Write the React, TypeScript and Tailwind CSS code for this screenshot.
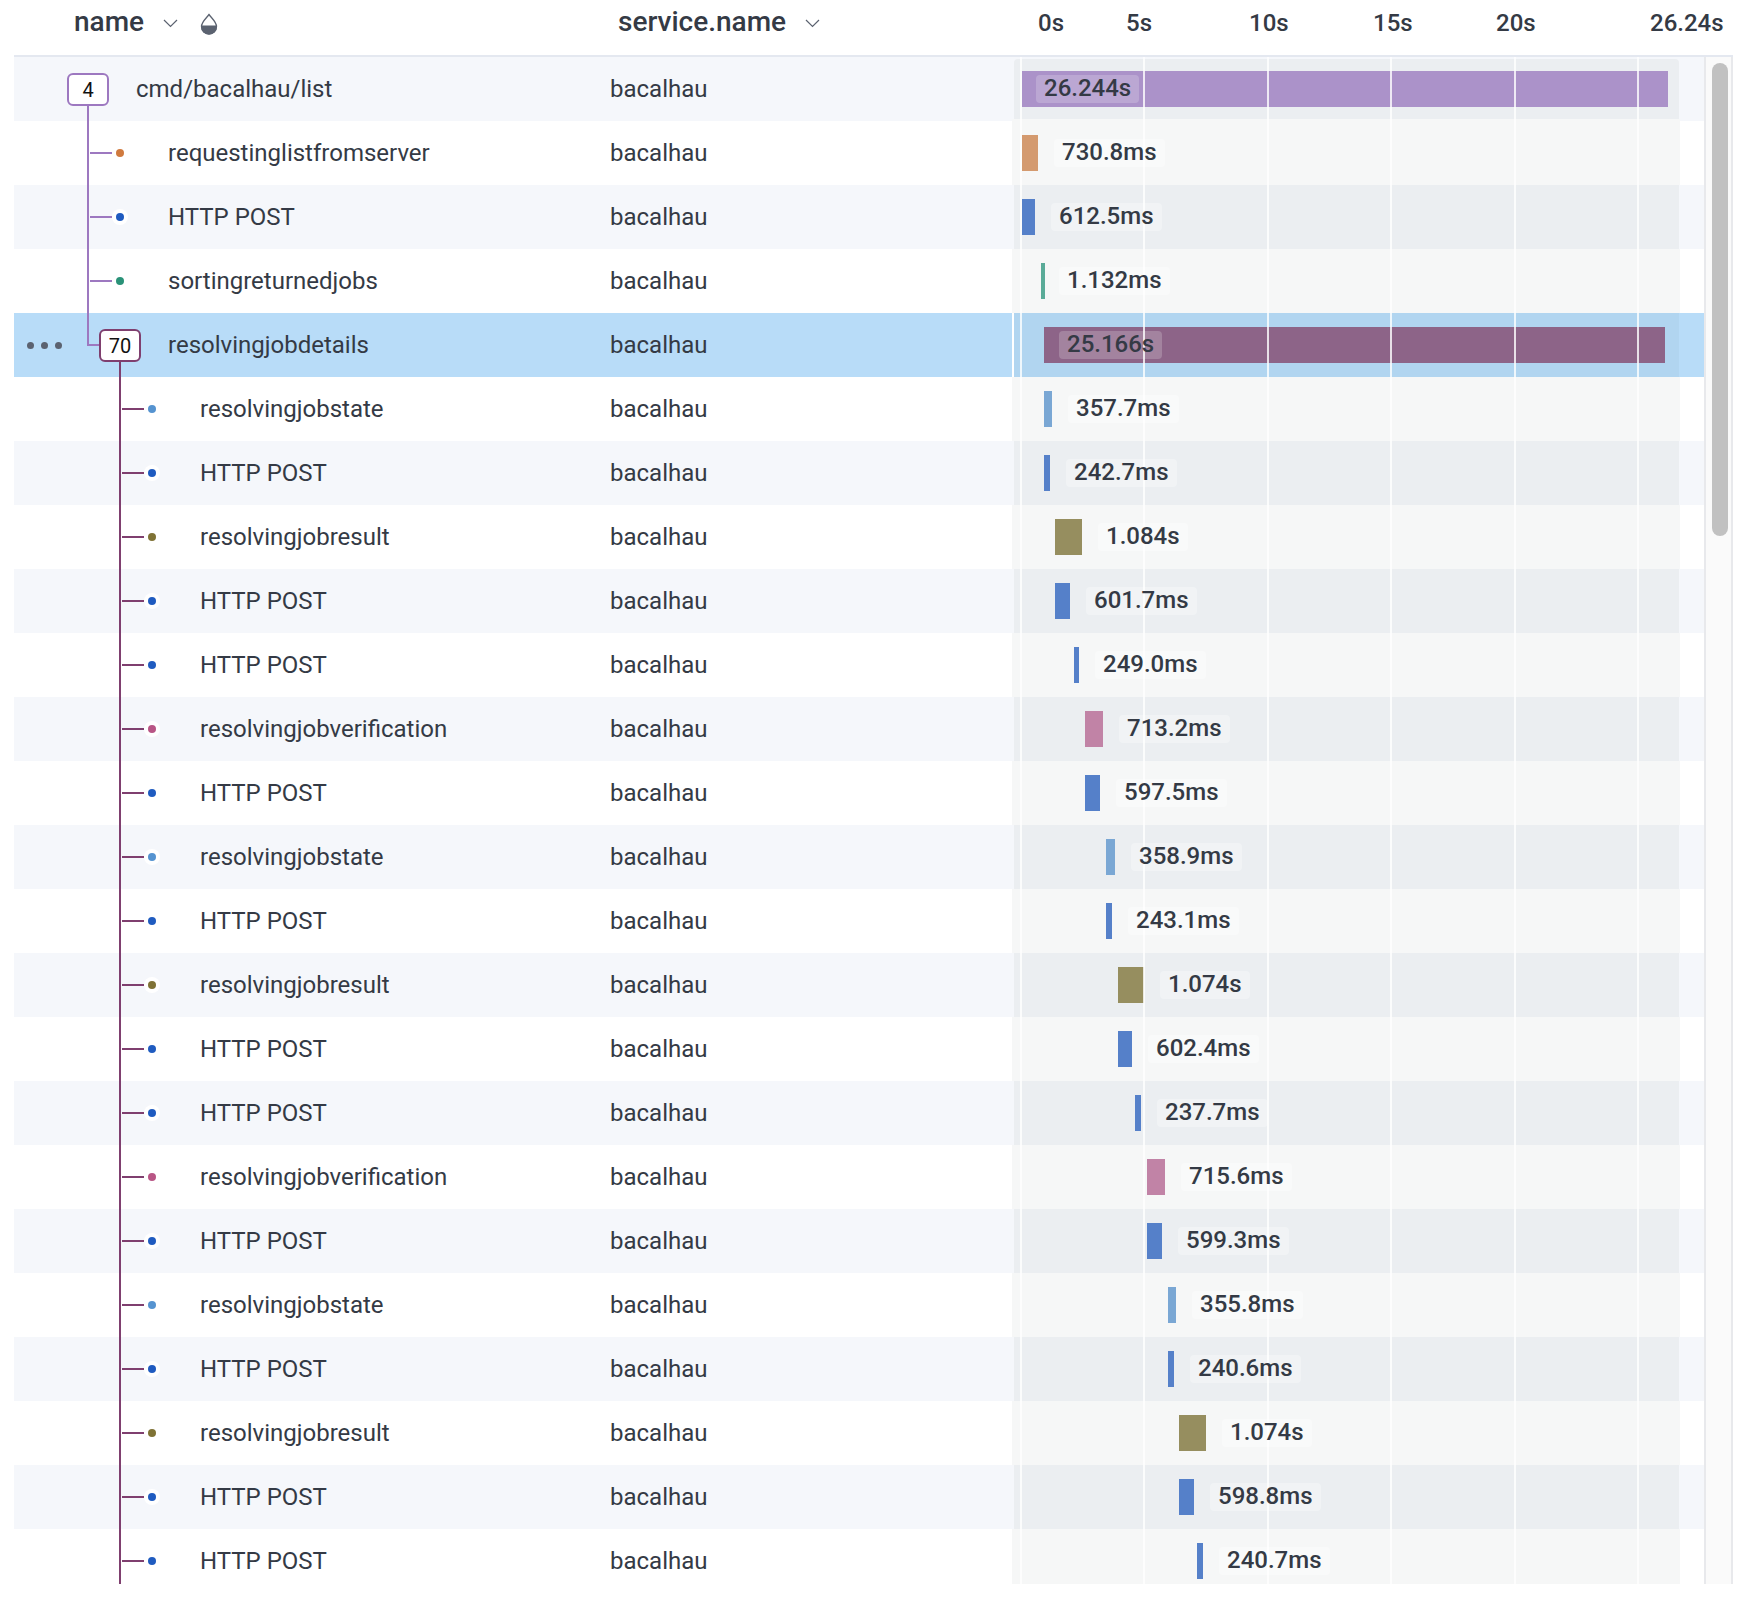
const font = "[font-family:Roboto,'Liberation_Sans',sans-serif]";

type Span = {
  name: string;
  depth: 0 | 1 | 2;
  dur: string;
  left: number;
  right: number;
  bar: string;
  dot: string;
  labelX?: number;
};

const PURPLE = "#9d78c0";
const PLUM = "#7f3f6f";
const K = {
  blue: ["#5580c9", "#1f5bc0"],
  state: ["#7aa7d4", "#5593d0"],
  result: ["#968e5f", "#7f7235"],
  verify: ["#c183a6", "#b85585"],
};

function s(name: string, dur: string, left: number, right: number, k: string[]): Span {
  return { name, depth: 2, dur, left, right, bar: k[0], dot: k[1] };
}

const spans: Span[] = [
  { name: "cmd/bacalhau/list", depth: 0, dur: "26.244s", left: 1022, right: 1668, bar: "#ab92c9", dot: PURPLE, labelX: 1036 },
  { name: "requestinglistfromserver", depth: 1, dur: "730.8ms", left: 1022, right: 1038, bar: "#d49a6f", dot: "#d07a3e" },
  { name: "HTTP POST", depth: 1, dur: "612.5ms", left: 1022, right: 1035, bar: K.blue[0], dot: K.blue[1] },
  { name: "sortingreturnedjobs", depth: 1, dur: "1.132ms", left: 1041, right: 1045, bar: "#5aab98", dot: "#2a9278", labelX: 1059 },
  { name: "resolvingjobdetails", depth: 1, dur: "25.166s", left: 1044, right: 1665, bar: "#8d6488", dot: PLUM, labelX: 1059 },
  s("resolvingjobstate", "357.7ms", 1044, 1052, K.state),
  s("HTTP POST", "242.7ms", 1044, 1050, K.blue),
  s("resolvingjobresult", "1.084s", 1055, 1082, K.result),
  s("HTTP POST", "601.7ms", 1055, 1070, K.blue),
  s("HTTP POST", "249.0ms", 1074, 1079, K.blue),
  s("resolvingjobverification", "713.2ms", 1085, 1103, K.verify),
  s("HTTP POST", "597.5ms", 1085, 1100, K.blue),
  s("resolvingjobstate", "358.9ms", 1106, 1115, K.state),
  s("HTTP POST", "243.1ms", 1106, 1112, K.blue),
  s("resolvingjobresult", "1.074s", 1118, 1144, K.result),
  s("HTTP POST", "602.4ms", 1118, 1132, K.blue),
  s("HTTP POST", "237.7ms", 1135, 1141, K.blue),
  s("resolvingjobverification", "715.6ms", 1147, 1165, K.verify),
  s("HTTP POST", "599.3ms", 1147, 1162, K.blue),
  s("resolvingjobstate", "355.8ms", 1168, 1176, K.state),
  s("HTTP POST", "240.6ms", 1168, 1174, K.blue),
  s("resolvingjobresult", "1.074s", 1179, 1206, K.result),
  s("HTTP POST", "598.8ms", 1179, 1194, K.blue),
  s("HTTP POST", "240.7ms", 1197, 1203, K.blue),
];

const ticks = [1020, 1143, 1267, 1390, 1514, 1637];
const axis: [string, number][] = [
  ["0s", 1038],
  ["5s", 1126],
  ["10s", 1249],
  ["15s", 1373],
  ["20s", 1496],
  ["26.24s", 1650],
];

function Chevron() {
  return (
    <svg width="15" height="9" viewBox="0 0 15 9" fill="none" className="block">
      <path d="M1 1l6.5 6.5L14 1" stroke="#5b6270" strokeWidth="1.2" />
    </svg>
  );
}

function Drop() {
  return (
    <svg width="18" height="22" viewBox="0 0 18 22" fill="none" className="block">
      <path d="M9 1.5C6.5 5 1.5 9 1.5 13.5a7.5 7.5 0 0 0 15 0C16.5 9 11.5 5 9 1.5z" stroke="#5b6270" strokeWidth="1.3" fill="#fff" />
      <path d="M1 12.5h16v1a8 8 0 0 1-16 0z" fill="#5b6270" />
    </svg>
  );
}

function Box({ text, color }: { text: string; color: string }) {
  return (
    <div
      className="relative z-10 flex h-[33px] w-[42px] items-center justify-center rounded-[6px] border-2 bg-white text-[20px] text-[#111]"
      style={{ borderColor: color }}
    >
      {text}
    </div>
  );
}

function Connectors({ span, index }: { span: Span; index: number }) {
  const isRoot = index === 0;
  const isJob = index === 4;
  const halo = index % 2 === 0 && !isJob;
  if (isRoot) {
    return (
      <>
        <div className="absolute left-[53px] top-[16px]">
          <Box text="4" color={PURPLE} />
        </div>
        <div className="absolute bottom-0 left-[73px] top-[48px] w-[2px] bg-[#9d78c0]" />
      </>
    );
  }
  if (isJob) {
    return (
      <>
        <div className="absolute left-[13px] top-[28.5px] flex gap-[7px]">
          <span className="h-[7px] w-[7px] rounded-full bg-[#5b6270]" />
          <span className="h-[7px] w-[7px] rounded-full bg-[#5b6270]" />
          <span className="h-[7px] w-[7px] rounded-full bg-[#5b6270]" />
        </div>
        <div className="absolute left-[73px] top-0 h-[32px] w-[2px] bg-[#9d78c0]" />
        <div className="absolute left-[73px] top-[31px] h-[2px] w-[14px] bg-[#9d78c0]" />
        <div className="absolute left-[85px] top-[16px]">
          <Box text="70" color={PLUM} />
        </div>
        <div className="absolute bottom-0 left-[105px] top-[48px] w-[2px] bg-[#7f3f6f]" />
      </>
    );
  }
  const line = span.depth === 1 ? "bg-[#9d78c0]" : "bg-[#7f3f6f]";
  const v = span.depth === 1 ? "left-[73px]" : "left-[105px]";
  const h = span.depth === 1 ? "left-[76px]" : "left-[108px]";
  const dot = span.depth === 1 ? "left-[98px]" : "left-[130px]";
  return (
    <>
      <div className={`absolute inset-y-0 w-[2px] ${v} ${line}`} />
      <div className={`absolute top-[31px] h-[2px] w-[22px] ${h} ${line}`} />
      <div
        className={`absolute top-[24px] flex h-[16px] w-[16px] items-center justify-center rounded-full ${dot} ${halo ? "bg-white" : ""}`}
      >
        <span className="h-[8px] w-[8px] rounded-full" style={{ backgroundColor: span.dot }} />
      </div>
    </>
  );
}

function Track({ span, index }: { span: Span; index: number }) {
  const isOdd = index % 2 === 0;
  const isJob = index === 4;
  const long = span.right - span.left > 100;
  const labelBg = long ? "bg-white/20" : isOdd ? "bg-white/30" : "bg-white/40";
  const labelX = span.labelX ?? span.right + 16;
  return (
    <div className="relative h-full w-[668px] shrink-0">
      <div
        className={
          isJob
            ? "absolute bottom-0 left-[2px] right-[1px] top-0 bg-[#b1d5f0]"
            : index === 0
              ? "absolute bottom-[2px] left-[2px] right-[1px] top-[2px] rounded-t-[4px] bg-[#ebeef1]"
              : index === 1
                ? "absolute -top-[2px] bottom-0 left-0 right-0 bg-[#f6f7f7]"
                : isOdd
                  ? "absolute inset-y-0 left-[2px] right-[1px] bg-[#ebeef1]"
                  : "absolute inset-y-0 left-0 right-0 bg-[#f6f7f7]"
        }
      />
      {isJob && <div className="absolute inset-y-0 left-0 w-[2px] bg-white" />}
      <div
        className="absolute top-[14px] h-[36px]"
        style={{ left: span.left - 1012, width: span.right - span.left, backgroundColor: span.bar }}
      />
      <div
        className={`absolute top-[18px] z-20 flex h-[28px] items-center rounded-[4px] px-[8px] pb-[2px] text-[24px] font-medium leading-none text-[#343a45] ${labelBg}`}
        style={{ left: labelX - 1012 }}
      >
        {span.dur}
      </div>
    </div>
  );
}

function Row({ span, index }: { span: Span; index: number }) {
  const bg = index === 4 ? "bg-[#b8dcf8]" : index % 2 === 0 ? "bg-[#f5f7fb]" : "bg-white";
  const pad = span.depth === 0 ? "pl-[122px]" : span.depth === 1 ? "pl-[154px]" : "pl-[186px]";
  return (
    <div className={`relative flex h-[64px] shrink-0 items-center ${bg}`}>
      <Connectors span={span} index={index} />
      <div className={`w-[596px] shrink-0 truncate text-[24px] text-[#343a45] ${pad}`}>{span.name}</div>
      <div className="w-[402px] shrink-0 text-[24px] text-[#343a45]">bacalhau</div>
      <Track span={span} index={index} />
    </div>
  );
}

export default function App() {
  return (
    <div className={`h-[1608px] w-[1748px] overflow-hidden bg-white ${font}`}>
      <div className="ml-[14px] w-[1719px]">
        <div className="relative flex h-[57px] items-center border-b-2 border-[#e4e8f0] pb-[8px] text-[#343a45]">
          <div className="flex w-[596px] shrink-0 items-center pl-[60px]">
            <span className="-mt-[3px] text-[28px] font-medium">name</span>
            <span className="ml-[19px]">
              <Chevron />
            </span>
            <span className="ml-[22px]">
              <Drop />
            </span>
          </div>
          <div className="flex w-[402px] shrink-0 items-center pl-[8px]">
            <span className="-mt-[3px] text-[28px] font-medium">service.name</span>
            <span className="ml-[19px]">
              <Chevron />
            </span>
          </div>
          {axis.map(([t, x]) => (
            <span key={t} className="absolute top-[5px] text-[24px] font-medium" style={{ left: x - 14 }}>
              {t}
            </span>
          ))}
        </div>
        <div className="flex h-[1527px] overflow-hidden">
          <div className="relative w-[1690px] shrink-0 overflow-hidden">
            {spans.map((span, i) => (
              <Row key={i} span={span} index={i} />
            ))}
            {ticks.map((x) => (
              <div key={x} className="absolute inset-y-0 z-10 w-[2px] bg-white/80" style={{ left: x - 14 }} />
            ))}
          </div>
          <div className="w-[29px] shrink-0 border-x-2 border-[#e8e9ec] bg-[#fafafa] pl-[6px] pt-[6px]">
            <div className="h-[473px] w-[16px] rounded-full bg-[#c1c1c1]" />
          </div>
        </div>
      </div>
    </div>
  );
}
